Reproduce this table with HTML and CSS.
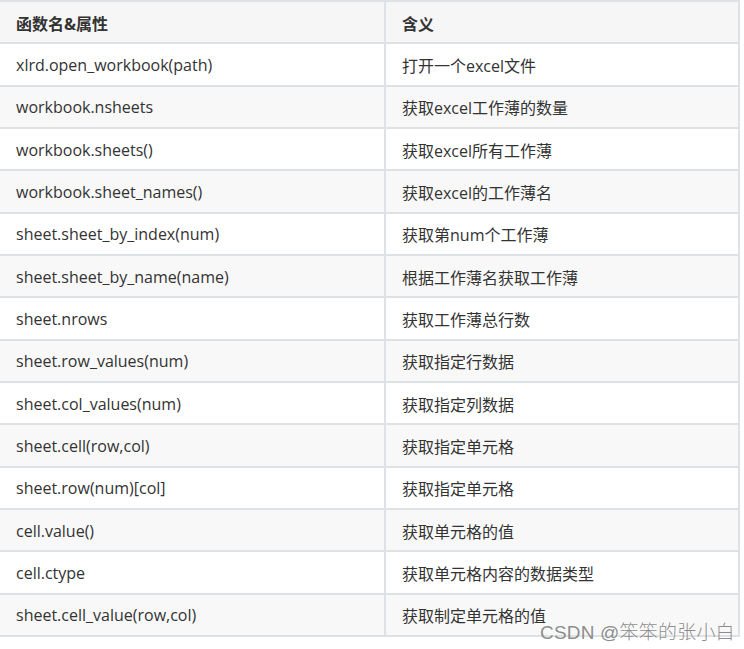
FILE: index.html
```html
<!DOCTYPE html>
<html>
<head>
<meta charset="utf-8">
<link rel="stylesheet" href="styles.css">
</head>
<body>
<div class="page">
  <div class="table">
    <div class="row head"><div class="cell">函数名&amp;属性</div><div class="cell">含义</div></div>
    <div class="row"><div class="cell">xlrd.open_workbook(path)</div><div class="cell">打开一个excel文件</div></div>
    <div class="row alt"><div class="cell">workbook.nsheets</div><div class="cell">获取excel工作薄的数量</div></div>
    <div class="row"><div class="cell">workbook.sheets()</div><div class="cell">获取excel所有工作薄</div></div>
    <div class="row alt"><div class="cell">workbook.sheet_names()</div><div class="cell">获取excel的工作薄名</div></div>
    <div class="row"><div class="cell">sheet.sheet_by_index(num)</div><div class="cell">获取第num个工作薄</div></div>
    <div class="row alt"><div class="cell">sheet.sheet_by_name(name)</div><div class="cell">根据工作薄名获取工作薄</div></div>
    <div class="row"><div class="cell">sheet.nrows</div><div class="cell">获取工作薄总行数</div></div>
    <div class="row alt"><div class="cell">sheet.row_values(num)</div><div class="cell">获取指定行数据</div></div>
    <div class="row"><div class="cell">sheet.col_values(num)</div><div class="cell">获取指定列数据</div></div>
    <div class="row alt"><div class="cell">sheet.cell(row,col)</div><div class="cell">获取指定单元格</div></div>
    <div class="row"><div class="cell">sheet.row(num)[col]</div><div class="cell">获取指定单元格</div></div>
    <div class="row alt"><div class="cell">cell.value()</div><div class="cell">获取单元格的值</div></div>
    <div class="row"><div class="cell">cell.ctype</div><div class="cell">获取单元格内容的数据类型</div></div>
    <div class="row alt"><div class="cell">sheet.cell_value(row,col)</div><div class="cell">获取制定单元格的值</div></div>
  </div>
  <div class="watermark">CSDN @笨笨的张小白</div>
</div>
</body>
</html>
```

FILE: styles.css
```css
html, body {
  margin: 0;
  padding: 0;
  background: #ffffff;
}
.page {
  position: relative;
  width: 744px;
  height: 649px;
  overflow: hidden;
}
.table {
  width: 740px;
  border-top: 2px solid #dfe2e5;
  font-family: "Open Sans", "Noto Sans CJK SC", sans-serif;
  font-size: 16px;
  color: #333333;
}
.row {
  display: grid;
  grid-template-columns: 386px 354px;
  height: 42.33px;
  box-sizing: border-box;
  border-bottom: 2px solid #dfe2e5;
  background: #ffffff;
}
.row.alt, .row.head {
  background: #f8f8f8;
}
.row.head {
  font-weight: bold;
  background: #f6f6f6;
}
.cell {
  display: flex;
  align-items: center;
  padding-left: 16px;
  padding-top: 1px;
  border-right: 2px solid #dfe2e5;
  white-space: nowrap;
}
.watermark {
  position: absolute;
  left: 540px;
  top: 617px;
  font-family: "Liberation Sans", "Noto Sans CJK SC", sans-serif;
  font-weight: 300;
  font-size: 19px;
  color: rgba(120, 120, 120, 0.85);
  letter-spacing: 0.2px;
}
```
